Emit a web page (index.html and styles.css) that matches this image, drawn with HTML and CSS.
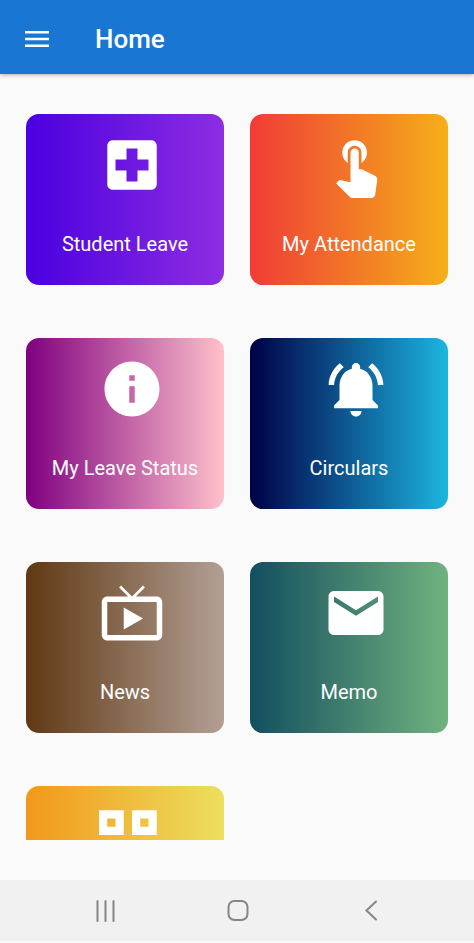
FILE: index.html
```html
<!DOCTYPE html>
<html lang="en">
<head>
  <meta charset="utf-8">
  <meta name="viewport" content="width=device-width, initial-scale=1">
  <title>Home</title>
  <link rel="stylesheet" href="styles.css">
</head>
<body>
  <header class="app-bar">
    <button class="menu-button" type="button" aria-label="Open menu">
      <svg class="menu-icon" viewBox="0 0 24 16" aria-hidden="true"><path d="M0 0h24v2.600H0zM0 6.700h24v2.600H0zM0 13.400h24V16H0z"/></svg>
    </button>
    <h1 class="app-title">Home</h1>
  </header>

  <main class="tiles">
    <button class="tile tile-leave" type="button">
      <svg class="tile-icon" viewBox="0 0 24 24" aria-hidden="true"><path d="M19 3H5c-1.100 0-1.990.9-1.990 2L3 19c0 1.100.9 2 2 2h14c1.100 0 2-.9 2-2V5c0-1.100-.9-2-2-2zm-1 11h-4v4h-4v-4H6v-4h4V6h4v4h4v4z"/></svg>
      <span class="tile-label">Student Leave</span>
    </button>
    <button class="tile tile-attendance" type="button">
      <svg class="tile-icon" viewBox="0 0 24 24" aria-hidden="true"><path d="M9 11.240V7.500C9 6.120 10.120 5 11.500 5S14 6.120 14 7.500v3.740c1.210-.81 2-2.180 2-3.740C16 5.010 13.990 3 11.500 3S7 5.010 7 7.500c0 1.560.79 2.930 2 3.740zm9.840 4.630l-4.540-2.260c-.17-.07-.35-.11-.54-.11H13v-6c0-.83-.67-1.500-1.500-1.500S10 6.670 10 7.500v10.740l-3.430-.72c-.08-.01-.15-.03-.24-.03-.31 0-.59.13-.79.33l-.79.8 4.940 4.940c.27.27.65.44 1.060.44h6.790c.75 0 1.330-.55 1.440-1.280l.75-5.270c.01-.07.02-.14.02-.2 0-.62-.38-1.160-.91-1.380z"/></svg>
      <span class="tile-label">My Attendance</span>
    </button>
    <button class="tile tile-status" type="button">
      <svg class="tile-icon" viewBox="0 0 24 24" aria-hidden="true"><path d="M12 2C6.480 2 2 6.480 2 12s4.480 10 10 10 10-4.480 10-10S17.520 2 12 2zm1 15h-2v-6h2v6zm0-8h-2V7h2v2z"/></svg>
      <span class="tile-label">My Leave Status</span>
    </button>
    <button class="tile tile-circulars" type="button">
      <svg class="tile-icon" viewBox="0 0 24 24" aria-hidden="true"><path d="M7.580 4.080L6.150 2.650C3.750 4.480 2.170 7.300 2.030 10.500h2c.15-2.650 1.510-4.970 3.550-6.420zm12.390 6.420h2c-.15-3.200-1.730-6.020-4.120-7.850l-1.420 1.430c2.020 1.450 3.390 3.770 3.540 6.420zM18 11c0-3.070-1.640-5.640-4.500-6.320V4c0-.83-.67-1.500-1.500-1.500s-1.500.67-1.500 1.500v.68C7.630 5.360 6 7.920 6 11v5l-2 2v1h16v-1l-2-2v-5zm-6 11c.14 0 .27-.01.4-.04.65-.14 1.180-.58 1.440-1.180.1-.24.15-.5.15-.78h-4c.01 1.100.9 2 2.010 2z"/></svg>
      <span class="tile-label">Circulars</span>
    </button>
    <button class="tile tile-news" type="button">
      <svg class="tile-icon" viewBox="0 0 24 24" aria-hidden="true"><path d="M21 6h-7.590l3.290-3.290L16 2l-4 4-4-4-.7.71L10.590 6H3c-1.100 0-2 .89-2 2v12c0 1.100.9 2 2 2h18c1.100 0 2-.9 2-2V8c0-1.110-.9-2-2-2zm0 14H3V8h18v12zM9 10v8l7-4z"/></svg>
      <span class="tile-label">News</span>
    </button>
    <button class="tile tile-memo" type="button">
      <svg class="tile-icon" viewBox="0 0 24 24" aria-hidden="true"><path d="M20 4H4c-1.100 0-1.990.9-1.990 2L2 18c0 1.100.9 2 2 2h16c1.100 0 2-.9 2-2V6c0-1.100-.9-2-2-2zm0 4l-8 5-8-5V6l8 5 8-5v2z"/></svg>
      <span class="tile-label">Memo</span>
    </button>
    <button class="tile tile-code" type="button" aria-label="QR code">
      <svg class="tile-icon" viewBox="0 0 24 24" aria-hidden="true"><path fill-rule="evenodd" d="M0 2.300h9v9H0zM3 5.300v3h3v-3zM12 2.300h9v9h-9zM15 5.300v3h3v-3zM0 14.300h9v9H0zM3 17.300v3h3v-3zM12 14.300h9v9h-9z"/></svg>
    </button>
  </main>

  <nav class="system-nav" aria-label="System">
    <button class="nav-button" type="button" aria-label="Recent apps">
      <svg class="nav-icon" viewBox="0 0 24 24" aria-hidden="true"><path d="M4.500 2v20M12.500 2v20M20.500 2v20"/></svg>
    </button>
    <button class="nav-button" type="button" aria-label="Home screen">
      <svg class="nav-icon" viewBox="0 0 24 24" aria-hidden="true"><rect x="2.500" y="2" width="19" height="19" rx="6"/></svg>
    </button>
    <button class="nav-button" type="button" aria-label="Back">
      <svg class="nav-icon" viewBox="0 0 24 24" aria-hidden="true"><path d="M17 2.500l-9.500 9 9.500 9"/></svg>
    </button>
  </nav>
</body>
</html>
```

FILE: styles.css
```css
* {
  box-sizing: border-box;
}

body {
  display: flex;
  flex-direction: column;
  height: 100vh;
  margin: 0;
  background: #fafafa;
  font-family: Roboto, "Liberation Sans", sans-serif;
}

button {
  margin: 0;
  padding: 0;
  border: 0;
  background: none;
  color: inherit;
  font: inherit;
  cursor: pointer;
}

.app-bar {
  display: flex;
  flex: none;
  align-items: center;
  gap: 34px;
  height: 74px;
  padding: 4px 13px 0;
  background: #1976d2;
  box-shadow: 0 1px 4px rgba(0, 0, 0, 0.3);
  color: #fff;
  z-index: 1;
}

.menu-button {
  display: grid;
  place-items: center;
  width: 48px;
  height: 48px;
}

.menu-icon {
  width: 24px;
  height: 16px;
  fill: currentColor;
}

.app-title {
  margin: 0;
  font-size: 26px;
  font-weight: 500;
  line-height: 32px;
}

.tiles {
  display: grid;
  flex: 1;
  grid-template-columns: 1fr 1fr;
  grid-auto-rows: 171px;
  gap: 53px 26px;
  min-height: 0;
  margin-bottom: 40px;
  padding: 40px 26px 0;
  overflow-y: auto;
  scrollbar-width: none;
}

.tile {
  display: flex;
  flex-direction: column;
  align-items: center;
  gap: 34px;
  padding-top: 18px;
  border-radius: 13px;
  color: #fff;
}

.tile-icon {
  width: 66px;
  height: 66px;
  margin-left: 13px;
  fill: currentColor;
}

.tile-label {
  font-size: 20px;
  line-height: 24px;
}

.tile-leave {
  background: linear-gradient(to right, #4a00e0, #8e2de2);
}

.tile-attendance {
  background: linear-gradient(to right, #f03c37, #f5af19);
}

.tile-status {
  background: linear-gradient(to right, #800080, #ffc0cb);
}

.tile-circulars {
  background: linear-gradient(to right, #000046, #1cb5e0);
}

.tile-news {
  background: linear-gradient(to right, #603813, #b29f94);
}

.tile-memo {
  background: linear-gradient(to right, #134e5e, #71b280);
}

.tile-code {
  background: linear-gradient(to right, #f2981b, #eddf5d);
}

.system-nav {
  display: flex;
  flex: none;
  align-items: center;
  justify-content: center;
  gap: 85px;
  height: 63px;
  padding-left: 2px;
  border-bottom: 2px solid #f8f8f8;
  background: #f1f1f1;
  color: #858585;
}

.nav-button {
  display: grid;
  place-items: center;
  width: 48px;
  height: 48px;
}

.nav-icon {
  width: 24px;
  height: 24px;
  fill: none;
  stroke: currentColor;
  stroke-width: 2;
  stroke-linecap: round;
}
```
